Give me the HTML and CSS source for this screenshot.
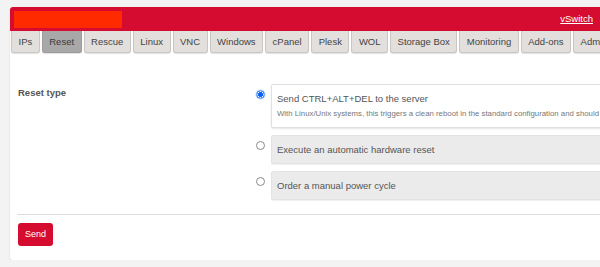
FILE: index.html
```html
<!DOCTYPE html>
<html>
<head>
<meta charset="utf-8">
<link rel="stylesheet" href="styles.css">
</head>
<body>
<div class="card">
  <div class="header">
    <div class="redacted"></div>
    <a class="vswitch" href="#">vSwitch</a>
  </div>
  <div class="tabs">
    <div class="tab">IPs</div>
    <div class="tab active">Reset</div>
    <div class="tab">Rescue</div>
    <div class="tab">Linux</div>
    <div class="tab">VNC</div>
    <div class="tab">Windows</div>
    <div class="tab">cPanel</div>
    <div class="tab">Plesk</div>
    <div class="tab">WOL</div>
    <div class="tab">Storage Box</div>
    <div class="tab">Monitoring</div>
    <div class="tab">Add-ons</div>
    <div class="tab">Admin</div>
  </div>
  <div class="content">
    <div class="form-row">
      <div class="label">Reset type</div>
      <div class="options">
        <div class="option">
          <span class="radio checked"></span>
          <div class="box selected">
            <div class="title">Send CTRL+ALT+DEL to the server</div>
            <div class="desc">With Linux/Unix systems, this triggers a clean reboot in the standard configuration and should therefore be tried first.</div>
          </div>
        </div>
        <div class="option">
          <span class="radio"></span>
          <div class="box">
            <div class="title">Execute an automatic hardware reset</div>
          </div>
        </div>
        <div class="option">
          <span class="radio"></span>
          <div class="box">
            <div class="title">Order a manual power cycle</div>
          </div>
        </div>
      </div>
    </div>
    <div class="divider"></div>
    <div class="actions">
      <button class="send">Send</button>
    </div>
  </div>
</div>
</body>
</html>
```
FILE: styles.css
```css
html, body {
  margin: 0;
  padding: 0;
  overflow: hidden;
  background: #f3f3f3;
  font-family: "Liberation Sans", Arial, sans-serif;
}
.card {
  margin: 7px 0 0 10px;
  width: 640px;
  background: #fff;
  border-radius: 3px;
  box-shadow: 0 1px 2px rgba(0, 0, 0, 0.12);
  padding-bottom: 14px;
}
.header {
  height: 24px;
  background: #d50c2f;
  border-radius: 3px 3px 0 0;
  display: flex;
  align-items: center;
  padding: 0 57px 0 4px;
}
.redacted {
  width: 108px;
  height: 17px;
  background: #ff2a00;
}
.vswitch {
  margin-left: auto;
  color: #fff;
  font-size: 9.5px;
  text-decoration: underline;
  margin-top: -1px;
}
.tabs {
  display: flex;
  gap: 2px;
  padding-left: 1px;
  white-space: nowrap;
}
.tab {
  flex: none;
  height: 21px;
  line-height: 21px;
  padding: 0 6.5px;
  font-size: 9.5px;
  color: #444;
  background: #e2dfdc;
  border: 1px solid #c9c7c4;
  border-top: none;
  border-radius: 0 0 3px 3px;
  box-shadow: 0 1px 1px rgba(0, 0, 0, 0.12);
}
.tab.active {
  background: #a8a8a8;
  border-color: #9c9c9c;
  color: #3a3a3a;
}
.content {
  padding: 31px 0 0 7px;
}
.form-row {
  display: grid;
  grid-template-columns: 238.5px 1fr;
}
.label {
  font-size: 9.5px;
  font-weight: bold;
  color: #555;
  line-height: 11px;
  margin-top: 2.5px;
  padding-left: 1px;
}
.options {
  display: flex;
  flex-direction: column;
  gap: 7px;
}
.option {
  display: flex;
  align-items: flex-start;
}
.radio {
  flex: none;
  box-sizing: border-box;
  width: 9px;
  height: 9px;
  margin-top: 6px;
  margin-right: 6.5px;
  border-radius: 50%;
  border: 1px solid #8a8a8a;
  background: #fff;
}
.radio.checked {
  border: 1px solid #4f92f0;
  background: radial-gradient(circle, #0b5ff2 0 2.2px, #fff 2.6px 2.9px, #3d86f4 3.3px);
  box-shadow: 0 0 0 0.5px rgba(80, 140, 240, 0.35);
}
.box {
  width: 420px;
  padding: 8px 5px 8px 5px;
  border: 1px solid #e3e3e3;
  border-radius: 2px;
  background: #ebebeb;
  box-shadow: 0 1px 1px rgba(0, 0, 0, 0.06);
  white-space: nowrap;
}
.box.selected {
  background: #fff;
  border-color: #e0e0e0;
  box-shadow: 0 1px 2px rgba(0, 0, 0, 0.1);
}
.title {
  font-size: 9.5px;
  line-height: 11px;
  color: #555;
}
.desc {
  font-size: 7.8px;
  line-height: 10px;
  color: #777;
  margin-top: 5px;
}
.divider {
  height: 1px;
  background: #dcdcdc;
  margin-top: 14px;
}
.actions {
  padding: 7.5px 0 0 1px;
}
.send {
  display: block;
  width: 35px;
  height: 23px;
  padding: 0;
  border: none;
  border-radius: 3px;
  background: #d50c2f;
  color: #fff;
  font-family: "Liberation Sans", Arial, sans-serif;
  font-size: 9px;
}
```
